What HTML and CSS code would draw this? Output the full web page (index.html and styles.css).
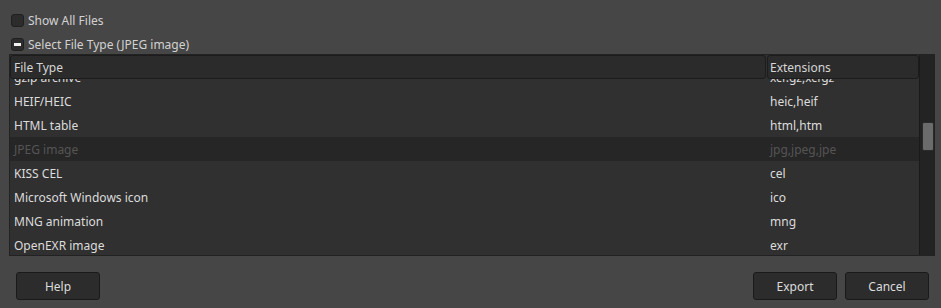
FILE: index.html
```html
<!DOCTYPE html>
<html lang="en">
<head>
    <meta charset="UTF-8">
    <title>Export Image - File Type</title>
    <link rel="stylesheet" href="styles.css">
</head>
<body>

<div class="dialog">
    <label class="check-row">
        <span class="check"></span>
        Show All Files
    </label>
    <label class="check-row">
        <span class="check mixed"></span>
        Select File Type (JPEG image)
    </label>

    <div class="tree">
        <div class="tree-main">
            <div class="tree-head">
                <div class="head-cell col-type">File Type</div>
                <div class="head-cell col-ext">Extensions</div>
            </div>
            <div class="tree-view">
                <div class="tree-rows">
                    <div class="row"><span class="col-type">gzip archive</span><span class="col-ext">xcf.gz,xcfgz</span></div>
                    <div class="row"><span class="col-type">HEIF/HEIC</span><span class="col-ext">heic,heif</span></div>
                    <div class="row"><span class="col-type">HTML table</span><span class="col-ext">html,htm</span></div>
                    <div class="row selected"><span class="col-type">JPEG image</span><span class="col-ext">jpg,jpeg,jpe</span></div>
                    <div class="row"><span class="col-type">KISS CEL</span><span class="col-ext">cel</span></div>
                    <div class="row"><span class="col-type">Microsoft Windows icon</span><span class="col-ext">ico</span></div>
                    <div class="row"><span class="col-type">MNG animation</span><span class="col-ext">mng</span></div>
                    <div class="row"><span class="col-type">OpenEXR image</span><span class="col-ext">exr</span></div>
                </div>
            </div>
        </div>
        <div class="scrollbar">
            <div class="thumb"></div>
        </div>
    </div>

    <div class="actions">
        <button class="btn">Help</button>
        <div class="spacer"></div>
        <button class="btn">Export</button>
        <button class="btn">Cancel</button>
    </div>
</div>

</body>
</html>
```

FILE: styles.css
```css
html, body {
    margin: 0;
    height: 100%;
}
body {
    background-color: #464646;
    color: #dcdcdc;
    font-family: 'Noto Sans', 'Open Sans', sans-serif;
    font-size: 12px;
    overflow: hidden;
}
.dialog {
    display: flex;
    flex-direction: column;
    padding: 10px 6px 0 9px;
}
.check-row {
    display: flex;
    align-items: center;
    gap: 4px;
    height: 20px;
    padding-left: 2px;
    margin-bottom: 4px;
    color: #d2d2d2;
}
.check {
    width: 11px;
    height: 11px;
    border: 1px solid #1f1f1f;
    border-radius: 3px;
    background-color: #2c2c2c;
    display: flex;
    align-items: center;
    justify-content: center;
}
.check.mixed::after {
    content: '';
    width: 7px;
    height: 3px;
    background-color: #f0f0f0;
}
.tree {
    display: flex;
    height: 200px;
    margin-top: -4px;
    border: 1px solid #222;
    background-color: #303030;
}
.tree-main {
    flex: 1;
    display: flex;
    flex-direction: column;
    min-width: 0;
}
.tree-head {
    display: flex;
    height: 24px;
}
.head-cell {
    box-sizing: border-box;
    border: 1px solid #1c1c1c;
    border-radius: 3px;
    background-color: #2b2b2b;
    padding: 3px 3px 0;
    color: #d6d6d6;
}
.tree-head .col-type {
    width: 756px;
}
.tree-head .col-ext {
    flex: 1;
    margin-left: 1px;
    padding-left: 2px;
}
.tree-view {
    flex: 1;
    overflow: hidden;
}
.tree-rows {
    margin-top: -14px;
}
.row {
    display: flex;
    height: 24px;
    align-items: center;
}
.row .col-type {
    width: 752px;
    padding-left: 4px;
}
.row .col-ext {
    flex: 1;
    padding-left: 4px;
}
.row.selected {
    background-color: #262626;
    color: #555;
}
.scrollbar {
    width: 14px;
    background-color: #232323;
    border-left: 1px solid #1a1a1a;
    padding-top: 67px;
}
.thumb {
    margin-left: 2px;
    width: 12px;
    height: 29px;
    border-radius: 2px;
    background-color: #6b6b6b;
    border: 1px solid #2a2a2a;
    box-sizing: border-box;
}
.actions {
    display: flex;
    gap: 8px;
    margin-top: 16px;
    padding: 0 6px 0 7px;
}
.spacer {
    flex: 1;
}
.btn {
    width: 84px;
    height: 28px;
    border: 1px solid #1a1a1a;
    border-radius: 3px;
    background-color: #2c2c2c;
    color: #dcdcdc;
    font-family: inherit;
    font-size: 12px;
}
```
